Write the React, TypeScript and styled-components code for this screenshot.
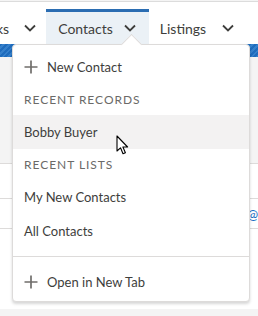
import React from 'react';
import styled, { createGlobalStyle } from 'styled-components';

const GlobalStyle = createGlobalStyle`
  html, body {
    margin: 0;
    padding: 0;
    background: #f4f4f4;
    font-family: Lato, "Open Sans", sans-serif;
  }
`;

const Page = styled.div`
  position: relative;
  width: 258px;
  height: 316px;
  overflow: hidden;
  background: #f4f4f4;
`;

const NavBar = styled.div`
  display: flex;
  height: 35px;
  margin-top: 1px;
  border-top: 1px solid #dcdcdc;
  padding-top: 7px;
  background: #fff;
  white-space: nowrap;
`;

const Tab = styled.div<{ $active?: boolean; $pl?: number; $pr?: number; $gap?: number }>`
  flex-shrink: 0;
  display: flex;
  align-items: center;
  gap: ${(p) => p.$gap ?? 12}px;
  height: 32px;
  padding: 0 ${(p) => p.$pr ?? 13}px 0 ${(p) => p.$pl ?? 12}px;
  border-top: 3px solid ${(p) => (p.$active ? '#2b6db2' : 'transparent')};
  background: ${(p) => (p.$active ? '#ebf1f6' : 'transparent')};
  font-size: 14px;
  color: #3e3e3c;

  &:first-child {
    margin-left: -4px;
  }
`;

const BlueBand = styled.div`
  height: 13px;
  background: repeating-linear-gradient(135deg, #1f6cbd 0 2px, #3580cb 2px 4px);
`;

const GrayArea = styled.div`
  height: 106px;
  background: #f4f4f4;
`;

const ListRow = styled.div<{ $h: number }>`
  display: flex;
  align-items: center;
  justify-content: flex-end;
  height: ${(p) => p.$h}px;
  border-top: 1px solid #dddbda;
  background: #fff;
  font-size: 13px;
  color: #1a6fc4;
`;

const Dropdown = styled.div`
  position: absolute;
  left: 12px;
  top: 44px;
  width: 236px;
  padding: 5px 0 2px;
  background: #fff;
  border: 1px solid #dddbda;
  border-radius: 4px;
  box-shadow: 0 2px 3px rgba(0, 0, 0, 0.16);
`;

const Nubbin = styled.div`
  position: absolute;
  left: 111px;
  top: -8px;
  width: 14px;
  height: 14px;
  background: #fff;
  border-top: 1px solid #dddbda;
  border-left: 1px solid #dddbda;
  transform: rotate(45deg);
`;

const Item = styled.div<{ $active?: boolean }>`
  display: flex;
  align-items: center;
  gap: 9px;
  height: 34px;
  padding: 0 11px;
  background: ${(p) => (p.$active ? '#f3f2f2' : 'transparent')};
  font-size: 13px;
  color: #3e3e3c;
`;

const Heading = styled.div`
  display: flex;
  align-items: center;
  height: 31px;
  padding: 0 11px;
  font-size: 12px;
  letter-spacing: 0.08em;
  text-transform: uppercase;
  color: #6b6a68;
`;

const Divider = styled.div`
  height: 1px;
  margin: 8px 0;
  background: #dddbda;
`;

const Cursor = styled.svg`
  position: absolute;
  left: 116px;
  top: 135px;
`;

const Chevron = () => (
  <svg width="12" height="8" viewBox="0 0 12 8">
    <path d="M1 1.5 L6 6.5 L11 1.5" fill="none" stroke="#3e3e3c" strokeWidth="1.8" />
  </svg>
);

const Plus = () => (
  <svg width="14" height="14" viewBox="0 0 14 14">
    <path d="M7 0.5 V13.5 M0.5 7 H13.5" stroke="#706e6b" strokeWidth="1.7" />
  </svg>
);

const App = () => (
  <Page>
    <GlobalStyle />
    <NavBar>
      <Tab $pl={0} $gap={15} $pr={10}>ks<Chevron /></Tab>
      <Tab $active $gap={11}>Contacts<Chevron /></Tab>
      <Tab $pl={11} $gap={16} $pr={12}>Listings<Chevron /></Tab>
      <Tab $pl={12}>C</Tab>
    </NavBar>
    <BlueBand />
    <GrayArea />
    <ListRow $h={34} />
    <ListRow $h={29}>@</ListRow>
    <ListRow $h={80} />

    <Dropdown>
      <Nubbin />
      <Item><Plus />New Contact</Item>
      <Heading>Recent Records</Heading>
      <Item $active>Bobby Buyer</Item>
      <Heading>Recent Lists</Heading>
      <Item>My New Contacts</Item>
      <Item>All Contacts</Item>
      <Divider />
      <Item><Plus />Open in New Tab</Item>
    </Dropdown>

    <Cursor width="14" height="21" viewBox="0 0 14 21">
      <path
        d="M1 1 L1 16 L4.5 12.8 L7 18.8 L9.4 17.8 L6.9 12 L11.6 12 Z"
        fill="#fff"
        stroke="#000"
        strokeWidth="1.1"
        strokeLinejoin="round"
      />
    </Cursor>
  </Page>
);

export default App;
